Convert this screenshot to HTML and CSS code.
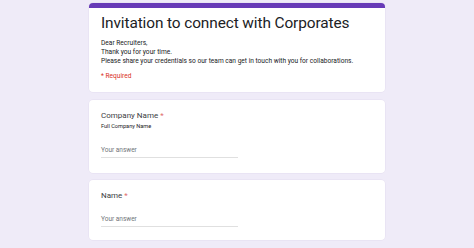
FILE: index.html
```html
<!DOCTYPE html>
<html>
<head>
<meta charset="utf-8">
<link rel="stylesheet" href="styles.css">
</head>
<body>
<main class="form">
  <section class="card header-card">
    <h1 class="title">Invitation to connect with Corporates</h1>
    <div class="desc">
      <div>Dear Recruiters,</div>
      <div>Thank you for your time.</div>
      <div>Please share your credentials so our team can get in touch with you for collaborations.</div>
    </div>
    <div class="required">* Required</div>
  </section>
  <section class="card question q1">
    <div class="label">Company Name <span class="star">*</span></div>
    <div class="help">Full Company Name</div>
    <div class="answer">Your answer</div>
  </section>
  <section class="card question q2">
    <div class="label">Name <span class="star">*</span></div>
    <div class="answer">Your answer</div>
  </section>
</main>
</body>
</html>
```
FILE: styles.css
```css
html, body {
  margin: 0;
  padding: 0;
}
body {
  background: #efebf8;
  font-family: Roboto, "Liberation Sans", sans-serif;
  color: #202124;
  height: 248px;
  overflow: hidden;
}
.form {
  width: 296px;
  margin: 0 auto;
  padding-top: 3px;
  display: flex;
  flex-direction: column;
  gap: 8px;
}
.card {
  background: #fff;
  border-radius: 4px;
  padding: 0 12px;
  box-shadow: 0 0 0 0.5px #e4deef;
}
.header-card {
  border-top: 5px solid #673ab7;
  padding-top: 6px;
  padding-bottom: 11px;
}
.title {
  margin: 0;
  font-weight: 400;
  font-size: 15.4px;
  line-height: 19px;
  letter-spacing: -0.1px;
  color: #202124;
}
.desc {
  margin-top: 6px;
  font-size: 6.6px;
  line-height: 9px;
}
.required {
  margin-top: 6px;
  font-size: 6.6px;
  line-height: 9px;
  color: #d93025;
}
.question {
  padding-top: 10px;
  padding-bottom: 15px;
}
.q2 {
  margin-top: -1px;
  padding-bottom: 13px;
}
.label {
  font-size: 8px;
  line-height: 11px;
  color: #3c4043;
}
.star {
  color: #e06b6b;
}
.help {
  margin-top: 2px;
  font-size: 5.6px;
  line-height: 7px;
}
.answer {
  margin-top: 16px;
  width: 137px;
  font-size: 6.5px;
  line-height: 9px;
  color: #70757a;
  border-bottom: 1px solid #e0e0e0;
  padding-bottom: 2px;
}
.q2 .answer {
  margin-top: 14px;
}
```
